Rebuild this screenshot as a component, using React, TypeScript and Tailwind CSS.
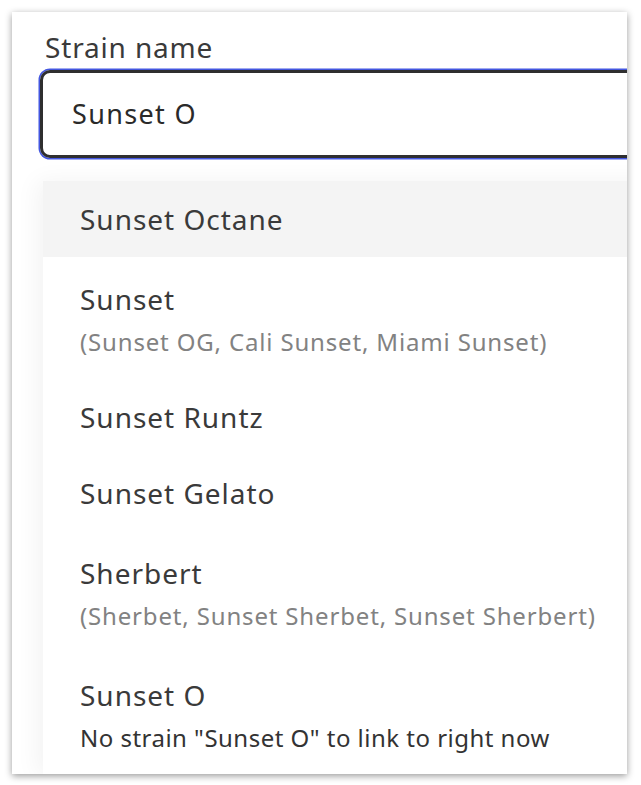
import React from 'react';

interface Option {
  name: string;
  sub?: string;
  note?: boolean;
}

const options: Option[] = [
  { name: 'Sunset Octane' },
  { name: 'Sunset', sub: '(Sunset OG, Cali Sunset, Miami Sunset)' },
  { name: 'Sunset Runtz' },
  { name: 'Sunset Gelato' },
  { name: 'Sherbert', sub: '(Sherbet, Sunset Sherbet, Sunset Sherbert)' },
  { name: 'Sunset O', sub: 'No strain "Sunset O" to link to right now', note: true },
];

export default function App() {
  return (
    <div className="w-[641px] h-[785px] bg-white pt-3 pl-3 font-['Noto_Sans',sans-serif]">
      <div className="w-[615px] h-[762px] bg-white overflow-hidden shadow-[0_2px_7px_rgba(0,0,0,0.4)]">
        <div className="w-[700px] pl-7 pt-[20px]">
          {/* label */}
          <div className="pl-[5px] text-[28px] leading-[30px] tracking-[0.03em] text-[#3a3a3a]">Strain name</div>

          {/* input */}
          <div className="mt-[8px] h-[88px] rounded-[10px] border-[3px] border-[#2f2f2f] shadow-[0_0_0_1.5px_#4356e0] flex items-center pl-[29px] text-[27px] tracking-[0.05em] text-[#2a2a2a]">
            Sunset O
          </div>

          {/* dropdown list */}
          <div className="mt-[23px] ml-[3px] bg-white shadow-[-6px_0_22px_rgba(0,0,0,0.05)]">
            {options.map((o, i) => (
              <div
                key={o.name}
                className={`pl-[37px] ${i === 0 ? 'bg-[#f4f4f4]' : ''} ${o.sub ? 'pt-[27px] pb-[23px]' : 'py-[23px]'}`}
              >
                <div className="text-[28px] leading-[30px] tracking-[0.035em] text-[#3a3a3a]">{o.name}</div>
                {o.sub && (
                  <div
                    className={`mt-[14px] text-[24px] leading-[28px] ${
                      o.note ? 'tracking-[0.02em] text-[#333333]' : 'tracking-[0.035em] text-[#828282]'
                    }`}
                  >
                    {o.sub}
                  </div>
                )}
              </div>
            ))}
          </div>
        </div>
      </div>
    </div>
  );
}
